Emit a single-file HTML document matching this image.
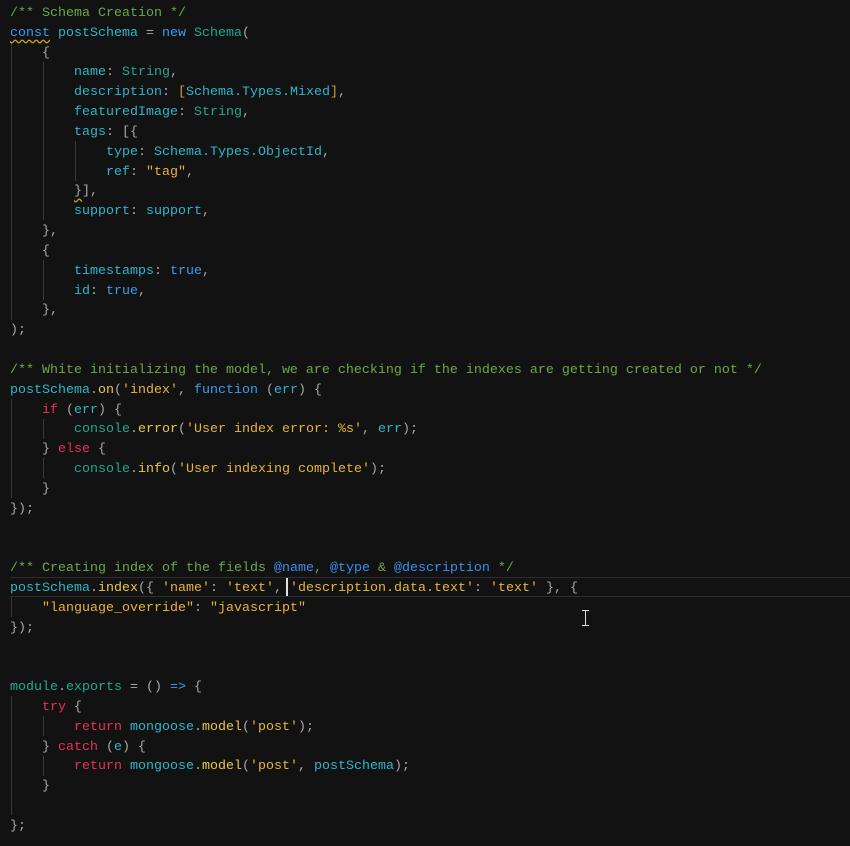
<!DOCTYPE html>
<html><head><meta charset="utf-8"><style>
html,body{margin:0;padding:0;background:#121212;width:850px;height:846px;overflow:hidden}
#ed{position:absolute;left:10px;top:4px;font-family:"Liberation Mono",monospace;font-size:13.33px;line-height:19.83px;color:#a8a8a8;white-space:pre}
.l{height:19.83px}
.c{color:#6aa84a}.k{color:#3a9cf0}.v{color:#2fb6cc}.t{color:#22a88f}.s{color:#e8b43a}.f{color:#e8c84a}.r{color:#e8305a}.p{color:#a8a8a8}.b{color:#d39a3a}.a{color:#3a8ff0}
.g{position:absolute;width:1px;background:#3a3a3a}
.sq{text-decoration:underline wavy #c9a020;text-underline-offset:3px}
</style></head><body>
<div class="g" style="left:11px;top:42px;height:278px"></div>
<div class="g" style="left:43px;top:62px;height:158px"></div>
<div class="g" style="left:43px;top:260px;height:40px"></div>
<div class="g" style="left:75px;top:141px;height:40px"></div>
<div class="g" style="left:11px;top:399px;height:99px"></div>
<div class="g" style="left:43px;top:419px;height:20px"></div>
<div class="g" style="left:43px;top:458px;height:20px"></div>
<div class="g" style="left:11px;top:597px;height:20px"></div>
<div class="g" style="left:11px;top:696px;height:119px"></div>
<div class="g" style="left:43px;top:716px;height:20px"></div>
<div class="g" style="left:43px;top:756px;height:20px"></div>
<div style="position:absolute;left:10px;right:0;top:577px;height:18px;border-top:1px solid #2c2c2c;border-bottom:1px solid #2c2c2c"></div>
<div style="position:absolute;left:286px;top:578px;width:2px;height:18px;background:#e0e0e0"></div>
<div style="position:absolute;left:585px;top:610px;width:1px;height:16px;background:#ddd"></div>
<div style="position:absolute;left:582px;top:610px;width:7px;height:1px;background:#ddd"></div>
<div style="position:absolute;left:582px;top:625px;width:7px;height:1px;background:#ddd"></div>
<div id="ed"><div class="l c">/** Schema Creation */</div><div class="l"><span class="k sq">const</span> <span class="v">postSchema</span> = <span class="k">new</span> <span class="t">Schema</span>(</div><div class="l">    {</div><div class="l">        <span class="v">name</span>: <span class="t">String</span>,</div><div class="l">        <span class="v">description</span>: <span class="b">[</span><span class="v">Schema.Types.Mixed</span><span class="b">]</span>,</div><div class="l">        <span class="v">featuredImage</span>: <span class="t">String</span>,</div><div class="l">        <span class="v">tags</span>: [{</div><div class="l">            <span class="v">type</span>: <span class="v">Schema.Types.ObjectId</span>,</div><div class="l">            <span class="v">ref</span>: <span class="s">"tag"</span>,</div><div class="l">        <span class="sq">}</span>],</div><div class="l">        <span class="v">support</span>: <span class="v">support</span>,</div><div class="l">    },</div><div class="l">    {</div><div class="l">        <span class="v">timestamps</span>: <span class="k">true</span>,</div><div class="l">        <span class="v">id</span>: <span class="k">true</span>,</div><div class="l">    },</div><div class="l">);</div><div class="l"> </div><div class="l c">/** White initializing the model, we are checking if the indexes are getting created or not */</div><div class="l"><span class="v">postSchema</span>.<span class="f">on</span>(<span class="s">'index'</span>, <span class="k">function</span> (<span class="v">err</span>) {</div><div class="l">    <span class="r">if</span> (<span class="v">err</span>) {</div><div class="l">        <span class="t">console</span>.<span class="f">error</span>(<span class="s">'User index error: %s'</span>, <span class="v">err</span>);</div><div class="l">    } <span class="r">else</span> {</div><div class="l">        <span class="t">console</span>.<span class="f">info</span>(<span class="s">'User indexing complete'</span>);</div><div class="l">    }</div><div class="l">});</div><div class="l"> </div><div class="l"> </div><div class="l"><span class="c">/** Creating index of the fields </span><span class="a">@name</span><span class="c">, </span><span class="a">@type</span><span class="c"> &amp; </span><span class="a">@description</span><span class="c"> */</span></div><div class="l"><span class="v">postSchema</span>.<span class="f">index</span>({ <span class="s">'name'</span>: <span class="s">'text'</span>, <span class="s">'description.data.text'</span>: <span class="s">'text'</span> }, {</div><div class="l">    <span class="s">"language_override"</span>: <span class="s">"javascript"</span></div><div class="l">});</div><div class="l"> </div><div class="l"> </div><div class="l"><span class="t">module</span>.<span class="t">exports</span> = () <span class="k">=&gt;</span> {</div><div class="l">    <span class="r">try</span> {</div><div class="l">        <span class="r">return</span> <span class="v">mongoose</span>.<span class="f">model</span>(<span class="s">'post'</span>);</div><div class="l">    } <span class="r">catch</span> (<span class="v">e</span>) {</div><div class="l">        <span class="r">return</span> <span class="v">mongoose</span>.<span class="f">model</span>(<span class="s">'post'</span>, <span class="v">postSchema</span>);</div><div class="l">    }</div><div class="l"> </div><div class="l">};</div></div>
</body></html>
